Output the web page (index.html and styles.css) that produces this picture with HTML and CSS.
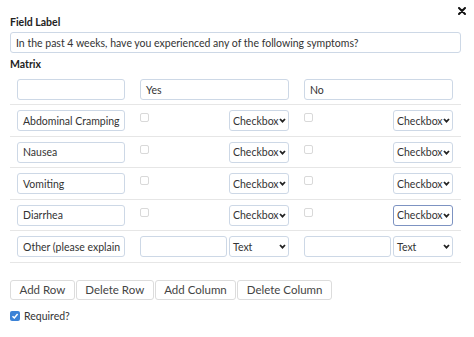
FILE: index.html
```html
<!DOCTYPE html>
<html lang="en">
  <head>
    <meta charset="UTF-8" />
    <meta name="viewport" content="width=device-width, initial-scale=1.0" />
    <title>Matrix field</title>
    <link rel="stylesheet" href="styles.css">
  </head>
  <body>
    <main class="modal">
      <span class="fechar">
        <svg width="8" height="8" viewBox="0 0 8 8"><path d="M1 1 L7 7 M7 1 L1 7" stroke="#111" stroke-width="2" stroke-linecap="round"/></svg>
      </span>

      <label class="rotulo">Field Label</label>
      <div class="campo largo">In the past 4 weeks, have you experienced any of the following symptoms?</div>

      <label class="rotulo matriz-titulo">Matrix</label>

      <div class="matriz">
        <div class="linha">
          <div class="campo"></div>
          <div class="campo">Yes</div>
          <div class="campo">No</div>
        </div>

        <div class="linha">
          <div class="campo">Abdominal Cramping</div>
          <div class="celula"><span class="caixa"></span><div class="seletor">Checkbox<svg width="7" height="5" viewBox="0 0 7 5"><path d="M1 1 L3.5 3.6 L6 1" fill="none" stroke="#222" stroke-width="1.8"/></svg></div></div>
          <div class="celula"><span class="caixa"></span><div class="seletor">Checkbox<svg width="7" height="5" viewBox="0 0 7 5"><path d="M1 1 L3.5 3.6 L6 1" fill="none" stroke="#222" stroke-width="1.8"/></svg></div></div>
        </div>

        <div class="linha">
          <div class="campo">Nausea</div>
          <div class="celula"><span class="caixa"></span><div class="seletor">Checkbox<svg width="7" height="5" viewBox="0 0 7 5"><path d="M1 1 L3.5 3.6 L6 1" fill="none" stroke="#222" stroke-width="1.8"/></svg></div></div>
          <div class="celula"><span class="caixa"></span><div class="seletor">Checkbox<svg width="7" height="5" viewBox="0 0 7 5"><path d="M1 1 L3.5 3.6 L6 1" fill="none" stroke="#222" stroke-width="1.8"/></svg></div></div>
        </div>

        <div class="linha">
          <div class="campo">Vomiting</div>
          <div class="celula"><span class="caixa"></span><div class="seletor">Checkbox<svg width="7" height="5" viewBox="0 0 7 5"><path d="M1 1 L3.5 3.6 L6 1" fill="none" stroke="#222" stroke-width="1.8"/></svg></div></div>
          <div class="celula"><span class="caixa"></span><div class="seletor">Checkbox<svg width="7" height="5" viewBox="0 0 7 5"><path d="M1 1 L3.5 3.6 L6 1" fill="none" stroke="#222" stroke-width="1.8"/></svg></div></div>
        </div>

        <div class="linha">
          <div class="campo">Diarrhea</div>
          <div class="celula"><span class="caixa"></span><div class="seletor">Checkbox<svg width="7" height="5" viewBox="0 0 7 5"><path d="M1 1 L3.5 3.6 L6 1" fill="none" stroke="#222" stroke-width="1.8"/></svg></div></div>
          <div class="celula"><span class="caixa"></span><div class="seletor foco">Checkbox<svg width="7" height="5" viewBox="0 0 7 5"><path d="M1 1 L3.5 3.6 L6 1" fill="none" stroke="#222" stroke-width="1.8"/></svg></div></div>
        </div>

        <div class="linha">
          <div class="campo">Other (please explain</div>
          <div class="celula"><div class="campo"></div><div class="seletor">Text<svg width="7" height="5" viewBox="0 0 7 5"><path d="M1 1 L3.5 3.6 L6 1" fill="none" stroke="#222" stroke-width="1.8"/></svg></div></div>
          <div class="celula"><div class="campo"></div><div class="seletor">Text<svg width="7" height="5" viewBox="0 0 7 5"><path d="M1 1 L3.5 3.6 L6 1" fill="none" stroke="#222" stroke-width="1.8"/></svg></div></div>
        </div>
      </div>

      <div class="botoes">
        <div class="botao">Add Row</div>
        <div class="botao">Delete Row</div>
        <div class="botao">Add Column</div>
        <div class="botao">Delete Column</div>
      </div>

      <div class="obrigatorio">
        <span class="marcado">
          <svg width="8" height="8" viewBox="0 0 8 8"><path d="M1.5 4.2 L3.3 6 L6.6 2" fill="none" stroke="#fff" stroke-width="1.5"/></svg>
        </span>
        Required?
      </div>
    </main>
  </body>
</html>
```

FILE: styles.css
```css
* {
  margin: 0;
  padding: 0;
  box-sizing: border-box;
}

body {
  width: 474px;
  height: 337px;
  background-color: #fff;
  font-family: "Lato", "Open Sans", sans-serif;
  font-size: 10.5px;
  color: #333;
}

main.modal {
  position: relative;
  padding: 15px 13px 0 10px;
  display: flex;
  flex-direction: column;
}

span.fechar {
  position: absolute;
  top: 5px;
  right: 8px;
}

label.rotulo {
  font-weight: bold;
  color: #222;
  line-height: 14px;
  margin-bottom: 3px;
}

label.matriz-titulo {
  margin-top: 4px;
  margin-bottom: 3px;
}

div.campo {
  height: 21px;
  border: 1px solid #cdd8e6;
  border-radius: 3px;
  padding: 0 5px;
  display: flex;
  align-items: center;
  white-space: nowrap;
  overflow: hidden;
  color: #333;
}

div.largo {
  width: 451px;
}

div.matriz {
  width: 451px;
  display: flex;
  flex-direction: column;
}

div.linha {
  display: grid;
  grid-template-columns: 108px 149px 149px;
  column-gap: 15px;
  padding: 5px 8px 5px 7px;
  border-bottom: 1px solid #e6e6e6;
  height: 31.6px;
}

div.linha:first-child {
  height: 31px;
}

div.celula {
  display: flex;
  justify-content: space-between;
  align-items: flex-start;
  gap: 2px;
}

div.celula div.campo {
  flex: 1;
}

span.caixa {
  width: 9px;
  height: 9px;
  margin-top: 3px;
  border: 1px solid #d9d9d9;
  border-radius: 2px;
}

div.seletor {
  width: 60px;
  height: 21px;
  flex-shrink: 0;
  border: 1px solid #cdd8e6;
  border-radius: 3px;
  padding: 0 2px 0 3px;
  display: flex;
  justify-content: space-between;
  align-items: center;
  color: #333;
}

div.foco {
  border-color: #7d93c2;
}

div.botoes {
  display: flex;
  gap: 1px;
  margin-top: 17px;
}

div.botao {
  height: 20px;
  padding: 0 8.5px;
  border: 1px solid #dcdcdc;
  border-radius: 3px;
  background-color: #fff;
  font-size: 11.5px;
  display: flex;
  align-items: center;
  color: #444;
}

div.obrigatorio {
  margin-top: 10px;
  display: flex;
  align-items: center;
  gap: 4px;
  line-height: 12px;
}

span.marcado {
  width: 10px;
  height: 10px;
  border-radius: 2px;
  background-color: #3b82d6;
  display: flex;
  justify-content: center;
  align-items: center;
}
```
